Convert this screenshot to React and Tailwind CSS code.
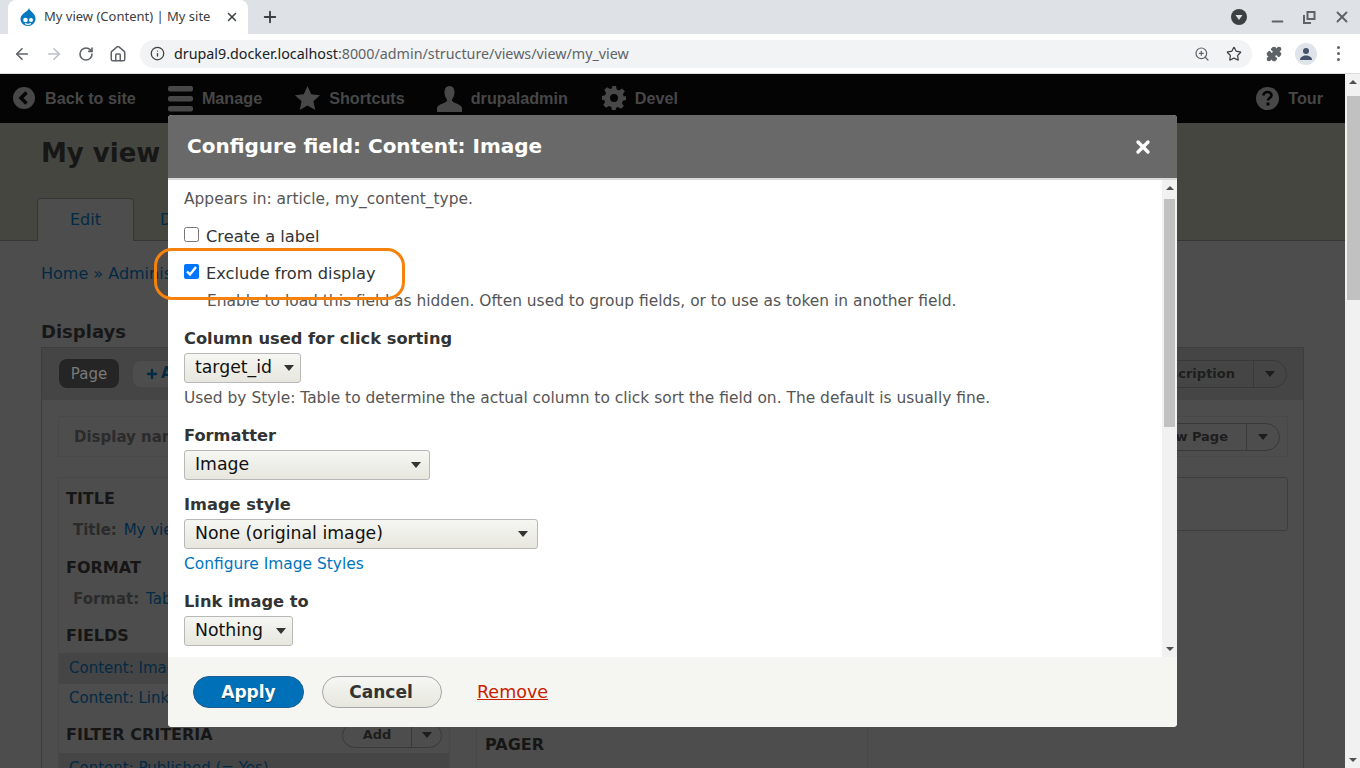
import { ArrowLeft, ArrowRight, RotateCw, Home, Info, Star, ZoomIn, Plus, X, Minus, Puzzle } from "lucide-react";

const DEJAVU = "font-['DejaVu_Sans',sans-serif]";
const TOOLBAR_FONT = "font-['Liberation_Sans',Arial,sans-serif]";

function Caret({ className = "border-t-[#333]" }) {
  return <span className={`inline-block w-0 h-0 border-x-[5px] border-x-transparent border-t-[6px] ${className}`} />;
}

function DrupalDrop() {
  return (
    <svg width="16" height="18" viewBox="0 0 16 18">
      <path d="M9 0c.5 2.600 3.200 3.700 4.800 6C15.700 8.500 16 11 15 13.200 13.800 16 11 18 8 18 3.700 18 .5 14.700.5 11 .5 8.200 2.300 6.300 4.500 4.700 6.300 3.400 8.300 2.200 9 0z" fill="#0678be" />
      <circle cx="5.500" cy="12" r="2.300" fill="#fff" />
      <circle cx="11" cy="12" r="2" fill="#fff" />
      <path d="M5 15.500c1.800 1 4.200 1 6 0" stroke="#fff" strokeWidth="1.200" fill="none" />
    </svg>
  );
}

function BrowserChrome() {
  return (
    <div className="shrink-0 font-['Noto_Sans',sans-serif]">
      <div className="h-[34px] bg-[#dee1e6] flex items-end pl-2 text-[#3c4043]">
        <div className="w-[240px] h-[34px] bg-white rounded-t-lg flex items-center pl-3 pr-[9px] gap-2">
          <DrupalDrop />
          <span className="text-[13px] flex-1 whitespace-nowrap text-[#3c4043]">My view (Content) | My site</span>
          <X size={14} strokeWidth={2.500} />
        </div>
        <div className="h-[34px] ml-[13px] flex items-center">
          <Plus size={18} strokeWidth={2.500} />
        </div>
        <div className="flex-1 h-[34px] flex items-center justify-end gap-[15px] pr-[9px] text-[#5f6368]">
          <svg width="16" height="16" viewBox="0 0 16 16" className="mr-[7px]">
            <circle cx="8" cy="8" r="8" fill="#3c4043" />
            <path d="M4.500 6h7L8 11z" fill="#dee1e6" />
          </svg>
          <Minus size={17} strokeWidth={2.500} className="translate-y-1" />
          <svg width="17" height="17" viewBox="0 0 17 17" fill="none" stroke="#5f6368" strokeWidth="2">
            <path d="M3 6v8h7" />
            <rect x="6.500" y="3" width="7" height="7" />
          </svg>
          <X size={18} strokeWidth={2.500} />
        </div>
      </div>
      <div className="h-[40px] bg-white border-b border-[#dadce0] flex items-center text-[#5f6368]">
        <div className="w-[140px] flex items-center pl-[13px] gap-[14px]">
          <ArrowLeft size={18} strokeWidth={2.200} />
          <ArrowRight size={18} strokeWidth={2.200} className="text-[#bdc1c6]" />
          <RotateCw size={16} strokeWidth={2.400} className="ml-px" />
          <Home size={18} strokeWidth={2} className="ml-px" />
        </div>
        <div className="w-[1112px] h-[28px] bg-[#f1f3f4] rounded-full flex items-center pl-[10px] pr-[10px]">
          <Info size={15} strokeWidth={2} className="text-[#3c4043]" />
          <span className="ml-[9px] text-[14.3px] text-[#5f6368] whitespace-nowrap flex-1">
            <span className="text-[#202124]">drupal9.docker.localhost</span>:8000/admin/structure/views/view/my_view
          </span>
          <ZoomIn size={16} strokeWidth={1.800} />
          <Star size={16} strokeWidth={1.800} className="ml-[16px] text-[#3c4043]" />
        </div>
        <Puzzle size={16} strokeWidth={2} fill="#5f6368" className="ml-[14px]" />
        <div className="ml-[13px] w-[22px] h-[22px] rounded-full bg-[#dfe3ea] flex items-center justify-center">
          <svg width="14" height="14" viewBox="0 0 14 14" fill="#45526b">
            <circle cx="7" cy="4" r="3" />
            <path d="M1 13c0-3 3-4.500 6-4.500s6 1.500 6 4.500z" />
          </svg>
        </div>
        <div className="ml-[20px] flex flex-col gap-[3px]">
          <span className="w-[3px] h-[3px] rounded-full bg-[#5f6368]" />
          <span className="w-[3px] h-[3px] rounded-full bg-[#5f6368]" />
          <span className="w-[3px] h-[3px] rounded-full bg-[#5f6368]" />
        </div>
      </div>
    </div>
  );
}

function ToolbarItem({ icon, label, className = "" }) {
  return (
    <div className={`flex items-center gap-[9px] ${className}`}>
      {icon}
      <span className="text-[16.2px] font-bold text-[#474747]">{label}</span>
    </div>
  );
}

function AdminToolbar() {
  const c = "#484848";
  return (
    <div className={`h-[49px] bg-[#040404] flex items-center pl-[12px] pr-[22px] shrink-0 ${TOOLBAR_FONT}`}>
      <ToolbarItem
        label="Back to site"
        icon={
          <svg width="24" height="24" viewBox="0 0 24 24">
            <circle cx="12" cy="12" r="11" fill={c} />
            <path d="M14.500 6.500 9 12l5.500 5.500" stroke="#040404" strokeWidth="3.500" fill="none" />
          </svg>
        }
      />
      <ToolbarItem
        className="ml-[32px]"
        label="Manage"
        icon={
          <svg width="25" height="26" viewBox="0 0 25 26" fill={c}>
            <rect y="0" width="25" height="5.500" rx="2" />
            <rect y="10" width="25" height="5.500" rx="2" />
            <rect y="20" width="25" height="5.500" rx="2" />
          </svg>
        }
      />
      <ToolbarItem
        className="ml-[33px]"
        label="Shortcuts"
        icon={
          <svg width="25" height="24" viewBox="0 0 25 24" fill={c}>
            <path d="M12.500 0l3.700 8.300 8.800.9-6.600 6 1.900 8.800-7.800-4.600L4.700 24l1.900-8.800L0 9.200l8.800-.9z" />
          </svg>
        }
      />
      <ToolbarItem
        className="ml-[32px]"
        label="drupaladmin"
        icon={
          <svg width="25" height="26" viewBox="0 0 25 26" fill={c}>
            <path d="M12.500 0c3.500 0 5 2.800 5 6.500 0 3-1.200 5.300-2.400 6.800-.5 1.500.3 2.700 2.500 3.500 3.400 1.200 6.400 2.600 7.400 4.700V26H0v-4.500c1-2.100 4-3.500 7.400-4.700 2.200-.8 3-2 2.500-3.500C8.700 11.800 7.500 9.500 7.500 6.500c0-3.700 1.500-6.500 5-6.500z" />
          </svg>
        }
      />
      <ToolbarItem
        className="ml-[34px]"
        label="Devel"
        icon={
          <svg width="24" height="24" viewBox="0 0 24 24" fill={c}>
            <path fillRule="evenodd" d="M10 0h4l.7 3.400 2.300 1 3-1.900 2.800 2.800-1.900 3 1 2.300L24 10v4l-3.100.7-1 2.300 1.900 3-2.800 2.800-3-1.900-2.300 1L14 24h-4l-.7-3.100-2.300-1-3 1.900-2.800-2.800 1.900-3-1-2.300L0 14v-4l3.100-.7 1-2.300-1.900-3L5 1.200l3 1.900 2.300-1zM12 8a4 4 0 1 0 0 8 4 4 0 0 0 0-8z" />
          </svg>
        }
      />
      <ToolbarItem
        className="ml-auto"
        label="Tour"
        icon={
          <svg width="23" height="23" viewBox="0 0 23 23">
            <circle cx="11.500" cy="11.500" r="11.500" fill={c} />
            <path d="M7.500 8.500c0-2.300 1.800-3.500 4-3.500s4 1.300 4 3.300c0 2.700-3.500 2.800-3.500 5.200" stroke="#040404" strokeWidth="2.600" fill="none" />
            <rect x="10.500" y="15.500" width="3" height="3" fill="#040404" />
          </svg>
        }
      />
    </div>
  );
}

function SplitButton({ label, caretW, className = "" }) {
  return (
    <div className={`h-[28px] rounded-full border border-[#393939] flex items-center text-[13px] font-bold text-[#1d1d1d] ${className}`}>
      <span className="px-[18px] whitespace-nowrap">{label}</span>
      <span className={`h-full border-l border-[#393939] flex items-center justify-center ${caretW}`}>
        <Caret className="border-t-[#1d1d1d]" />
      </span>
    </div>
  );
}

function SectionHead({ children }) {
  return <h3 className="text-[16px] font-bold leading-[20px] text-[#161616] uppercase">{children}</h3>;
}

function BackgroundPage() {
  const link = "text-[#032a44]";
  return (
    <div className="flex-1 min-h-0 bg-[#4d4d4d] overflow-hidden">
      <div className="h-[118px] bg-[#464641] border-b border-[#363636] px-[41px] flex flex-col justify-between">
        <h1 className="mt-[13px] text-[26px] leading-[34px] font-bold text-[#171717]">My view</h1>
        <div className={`flex h-[43px] -mx-[4px] -mb-px text-[16px] ${link}`}>
          <div className="w-[97px] bg-[#4d4d4d] border border-b-0 border-[#363636] rounded-t flex items-center justify-center">Edit</div>
          <div className="w-[98px] flex items-center justify-center">Devel</div>
        </div>
      </div>
      <div className="px-[41px]">
        <div className={`mt-[23px] text-[16px] leading-[20px] whitespace-nowrap ${link}`}>Home » Administration</div>
        <h2 className="mt-[36px] text-[18px] leading-[24px] font-bold text-[#171717]">Displays</h2>
        <div className="mt-[3px] border border-[#3d3d3d] border-b-0">
          <div className="h-[52px] bg-[#454545] border-b border-[#444] flex items-center pl-[17px] pr-[16px]">
            <span className="w-[60px] h-[29px] pt-px rounded-lg bg-[#252525] text-[#7a7a7a] text-[15px] flex items-center justify-center">Page</span>
            <span className={`ml-[13px] w-[120px] h-[28px] rounded-lg border border-[#444] bg-[#4d4d4d] text-[15px] font-bold flex items-center pl-[12px] gap-[2px] ${link}`}>
              <Plus size={14} strokeWidth={4} />Add
            </span>
            <SplitButton label="Edit view name/description" caretW="w-[33px]" className="ml-auto" />
          </div>
          <div className="pl-[16px] pr-[15px]">
            <div className="mt-[16px] h-[41px] pt-px border border-[#484848] flex items-center pl-[15px] pr-[7px]">
              <span className="text-[15px] font-bold text-[#2b2b2b]">Display name:</span>
              <SplitButton label="View Page" caretW="w-[33px]" className="ml-auto" />
            </div>
            <div className="mt-[20px] flex">
              <div className="w-[392px] border border-[#484848] border-b-0">
                <div className="pl-[7px] pr-[6px] pt-[11px]">
                  <SectionHead>Title</SectionHead>
                  <p className={`mt-[11px] ml-[7px] text-[15px] leading-[20px] ${link}`}><b className="text-[#2b2b2b] mr-[2px]">Title:</b> My view</p>
                  <div className="mt-[18px]"><SectionHead>Format</SectionHead></div>
                  <p className={`mt-[11px] ml-[7px] text-[15px] leading-[20px] ${link}`}><b className="text-[#2b2b2b] mr-[2px]">Format:</b> Table</p>
                  <div className="mt-[17px]"><SectionHead>Fields</SectionHead></div>
                </div>
                <div className={`mt-[7px] h-[31px] bg-[#454545] pl-[10px] flex items-center text-[15px] ${link}`}>Content: Image</div>
                <div className={`h-[29px] pl-[10px] flex items-center text-[15px] ${link}`}>Content: Link</div>
                <div className="h-[40px] pt-[4px] pl-[7px] pr-[7px] flex items-center justify-between">
                  <SectionHead>Filter criteria</SectionHead>
                  <div className="w-[100px] h-[25px] rounded-full border border-[#393939] flex items-center text-[13px] font-bold text-[#1d1d1d]">
                    <span className="flex-1 text-center">Add</span>
                    <span className="w-[30px] h-full border-l border-[#393939] flex items-center justify-center"><Caret className="border-t-[#1d1d1d]" /></span>
                  </div>
                </div>
                <div className={`h-[31px] bg-[#454545] pl-[10px] flex items-center text-[15px] whitespace-nowrap ${link}`}>Content: Published (= Yes)</div>
              </div>
              <div className="ml-[26px] flex-1 min-w-0">
                <div className="h-[54px] border border-[#3d3d3d] rounded-[3px]" />
                <div className="w-[392px] h-[300px] border border-[#484848] border-b-0 mt-[183px] pt-[20px] pl-[8px]">
                  <SectionHead>Pager</SectionHead>
                </div>
              </div>
            </div>
          </div>
        </div>
      </div>
    </div>
  );
}

function Select({ label, width, pad }) {
  return (
    <div
      style={{ width, paddingRight: pad }}
      className="mt-[5px] h-[30px] rounded-[3px] border border-[#b8b8b8] bg-gradient-to-b from-[#f6f6f3] to-[#e7e7df] flex items-center justify-between pl-[10px] text-[#111] text-[17.3px] leading-[26px] whitespace-nowrap"
    >
      <span className="-translate-y-px">{label}</span>
      <Caret />
    </div>
  );
}

function FieldLabel({ children, className = "" }) {
  return <div className={`text-[16.25px] leading-[20px] font-bold text-[#333] ${className}`}>{children}</div>;
}

function Scrollbar({ topH, thumbH, thumbClass, pb }) {
  return (
    <div className="w-[15px] bg-[#f1f1f1] flex flex-col shrink-0">
      <div style={{ height: topH }} className="flex justify-center pt-[6px]">
        <span className="w-0 h-0 border-x-[4px] border-x-transparent border-b-[4px] border-b-[#505050]" />
      </div>
      <div style={{ height: thumbH }} className={`bg-[#c1c1c1] ${thumbClass}`} />
      <div style={{ paddingBottom: pb }} className="flex-1 flex justify-center items-end">
        <span className="w-0 h-0 border-x-[4px] border-x-transparent border-t-[4px] border-t-[#505050]" />
      </div>
    </div>
  );
}

function ConfigureDialog() {
  return (
    <div className={`absolute left-[168px] top-[115px] w-[1009px] h-[612px] rounded-[4px] overflow-hidden flex flex-col bg-white ${DEJAVU}`}>
      <div className="h-[63px] bg-[#696969] flex items-center justify-between pl-[19px] pr-[24px] shrink-0">
        <h2 className="text-[20px] font-bold text-white -translate-y-px">Configure field: Content: Image</h2>
        <X size={20} strokeWidth={4} className="text-white" />
      </div>
      <div className="h-[2px] bg-[#d9d9d9] shrink-0" />
      <div className="flex-1 min-h-0 flex">
        <div className="flex-1 min-w-0 pl-[16px] pt-[8px] text-[15.44px] leading-[20px] text-[#333]">
          <p className="text-[#555] translate-y-px">Appears in: article, my_content_type.</p>
          <label className="mt-[18px] flex items-center gap-[7px] text-[16.25px] translate-y-px">
            <input type="checkbox" readOnly className="w-[15px] h-[15px] -translate-y-[3px]" />
            <span>Create a label</span>
          </label>
          <label className="mt-[17px] flex items-center gap-[7px] text-[16.25px] translate-y-px">
            <input type="checkbox" checked readOnly className="w-[15px] h-[15px] -translate-y-[3px]" />
            <span>Exclude from display</span>
          </label>
          <p className="mt-[7px] ml-[23px] text-[#555] translate-y-px">Enable to load this field as hidden. Often used to group fields, or to use as token in another field.</p>
          <FieldLabel className="mt-[18px] translate-y-px">Column used for click sorting</FieldLabel>
          <Select label="target_id" width={117} pad={6} />
          <p className="mt-[4px] text-[#555] translate-y-px">Used by Style: Table to determine the actual column to click sort the field on. The default is usually fine.</p>
          <FieldLabel className="mt-[18px] translate-y-px">Formatter</FieldLabel>
          <Select label="Image" width={246} pad={8} />
          <FieldLabel className="mt-[14px] translate-y-px">Image style</FieldLabel>
          <Select label="None (original image)" width={354} pad={9} />
          <a className="block mt-[4px] text-[#0074bd] translate-y-px">Configure Image Styles</a>
          <FieldLabel className="mt-[18px] translate-y-px">Link image to</FieldLabel>
          <Select label="Nothing" width={109} pad={6} />
        </div>
        <Scrollbar topH={19} thumbH={228} thumbClass="mx-[2px]" pb={6} />
      </div>
      <div className="h-[70px] bg-[#f5f5f2] flex items-center pl-[25px] shrink-0">
        <button className="w-[111px] h-[32px] pt-px rounded-full bg-[#0071b8] border border-[#1e5c90] text-white text-[17px] font-bold [text-shadow:0_1px_1px_rgba(0,0,0,0.5)]">Apply</button>
        <button className="ml-[18px] w-[120px] h-[32px] pt-px pr-[2px] rounded-full border border-[#a6a6a6] bg-gradient-to-b from-[#f6f6f3] to-[#e7e7df] text-[#333] text-[17px] font-bold">Cancel</button>
        <a className="ml-[35px] pt-px text-[17.5px] text-[#c72100] underline">Remove</a>
      </div>
    </div>
  );
}

export default function App() {
  return (
    <div className={`relative w-[1360px] h-[768px] overflow-hidden flex flex-col ${DEJAVU}`}>
      <BrowserChrome />
      <div className="flex-1 min-h-0 flex">
        <div className="flex-1 min-w-0 flex flex-col">
          <AdminToolbar />
          <BackgroundPage />
        </div>
        <Scrollbar topH={22} thumbH={204} thumbClass="ml-[2px]" pb={6} />
      </div>
      <ConfigureDialog />
      {/* orange annotation drawn on the screenshot */}
      <div className="absolute left-[154px] top-[248px] w-[251px] h-[52px] rounded-[18px] border-[3px] border-[#f5820d] pointer-events-none" />
    </div>
  );
}
